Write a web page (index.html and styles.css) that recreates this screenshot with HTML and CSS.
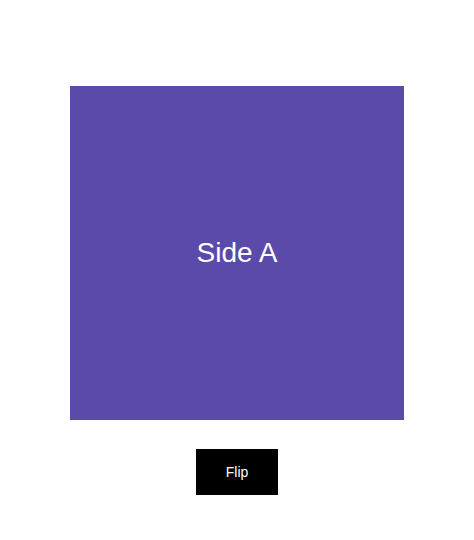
FILE: index.html
```html
<!DOCTYPE html>
<html lang="en">
<head>
    <meta charset="UTF-8">
    <meta name="viewport" content="width=device-width, initial-scale=1.0">
    <title>Flip Card</title>
    <link rel="stylesheet" href="styles.css">
</head>
<body>
    <div class="container">
        <div class="card" id="card">
            <div class="card-face">Side A</div>
        </div>
        <button class="flip-btn" id="flip">Flip</button>
    </div>

    <script>
        // toggle the label between the two sides
        document.getElementById('flip').addEventListener('click', function() {
            const face = document.querySelector('.card-face');
            face.textContent = face.textContent === 'Side A' ? 'Side B' : 'Side A';
        });
    </script>
</body>
</html>
```

FILE: styles.css
```css
body {
    font-family: "Liberation Sans", Arial, sans-serif;
    background-color: #fff;
    margin: 0;
    padding: 0;
}
.container {
    display: flex;
    flex-direction: column;
    align-items: center;
    padding-top: 86px;
}
.card {
    width: 334px;
    height: 334px;
    background-color: #5c4aaa;
    display: flex;
    align-items: center;
    justify-content: center;
}
.card-face {
    color: #fff;
    font-size: 28px;
}
.flip-btn {
    margin-top: 29px;
    padding: 15px 30px;
    background-color: #000;
    color: #fff;
    border: none;
    font-family: "Liberation Sans", Arial, sans-serif;
    font-size: 14px;
    line-height: 16px;
    cursor: pointer;
}
```
